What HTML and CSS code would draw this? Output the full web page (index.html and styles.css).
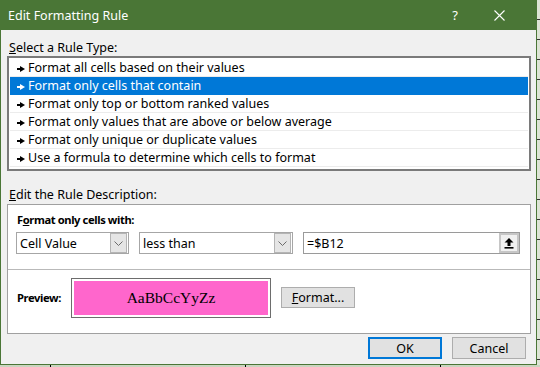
FILE: index.html
```html
<!DOCTYPE html>
<html lang="en">
<head>
  <meta charset="UTF-8" />
  <title>Edit Formatting Rule</title>
  <link rel="stylesheet" href="styles.css">
</head>
<body>

  <div class="screen">
    <div class="dialog">
      <div class="titlebar">
        <span class="title">Edit Formatting Rule</span>
        <span class="help">?</span>
        <span class="close">
          <svg width="11" height="11" viewBox="0 0 11 11"><path d="M0.5 0.5 L10.5 10.5 M10.5 0.5 L0.5 10.5" stroke="#fff" stroke-width="1.1" fill="none"/></svg>
        </span>
      </div>

      <div class="content">
        <div class="label"><u>S</u>elect a Rule Type:</div>
        <ul class="rules">
          <li><span class="pointer"></span>Format all cells based on their values</li>
          <li class="selected"><span class="pointer"></span>Format only cells that contain</li>
          <li><span class="pointer"></span>Format only top or bottom ranked values</li>
          <li><span class="pointer"></span>Format only values that are above or below average</li>
          <li><span class="pointer"></span>Format only unique or duplicate values</li>
          <li><span class="pointer"></span>Use a formula to determine which cells to format</li>
        </ul>

        <div class="label desc-label"><u>E</u>dit the Rule Description:</div>
        <div class="desc">
          <div class="desc-top">
            <div class="bold-label">F<u>o</u>rmat only cells with:</div>
            <div class="fields">
              <div class="combo combo-small">
                <span class="combo-text">Cell Value</span>
                <span class="drop">
                  <svg width="9" height="5" viewBox="0 0 9 5"><path d="M0.5 0.5 L4.5 4.5 L8.5 0.5" stroke="#6b6b6b" fill="none"/></svg>
                </span>
              </div>
              <div class="combo combo-mid">
                <span class="combo-text">less than</span>
                <span class="drop">
                  <svg width="9" height="5" viewBox="0 0 9 5"><path d="M0.5 0.5 L4.5 4.5 L8.5 0.5" stroke="#6b6b6b" fill="none"/></svg>
                </span>
              </div>
              <div class="combo ref-input">
                <span class="combo-text">=$B12</span>
                <span class="collapse">
                  <svg width="10" height="11" viewBox="0 0 10 11"><path d="M5 0 L9.5 4.5 L6.5 4.5 L6.5 8 L3.5 8 L3.5 4.5 L0.5 4.5 Z" fill="#000"/><rect x="0.5" y="9" width="9" height="1.6" fill="#000"/></svg>
                </span>
              </div>
            </div>
          </div>

          <div class="desc-bottom">
            <div class="bold-label preview-label">Preview:</div>
            <div class="preview"><div class="swatch">AaBbCcYyZz</div></div>
            <button class="btn btn-format"><u>F</u>ormat...</button>
          </div>
        </div>

        <div class="actions">
          <button class="btn btn-ok">OK</button>
          <button class="btn">Cancel</button>
        </div>
      </div>
    </div>
    <div class="sheet-edge"></div>
  </div>
  <div class="sheet-bottom">
    <span></span><span></span><span></span>
  </div>

</body>
</html>
```

FILE: styles.css
```css
body {
  margin: 0;
  width: 540px;
  height: 367px;
  overflow: hidden;
  font-family: 'Noto Sans', 'Open Sans', sans-serif;
  font-size: 12.5px;
  color: #000;
  background: #d3dccb;
}

.screen {
  display: flex;
  height: 365px;
}

/* dialog window */
.dialog {
  width: 535px;
  border: 1px solid #4a7636;
  border-top: 0;
  background: #f0f0f0;
  display: flex;
  flex-direction: column;
}

.titlebar {
  height: 30px;
  background: #4a7636;
  color: #fff;
  display: flex;
  align-items: center;
  padding: 0 15px 0 8px;
  margin: 0 -1px;
}

.title {
  flex: 1;
  font-size: 12.5px;
}

.help {
  width: 30px;
  text-align: center;
  font-size: 13px;
}

.close {
  width: 46px;
  margin-left: 6px;
  display: flex;
  justify-content: center;
}

.content {
  flex: 1;
  padding: 9px 5px 0 6px;
  display: flex;
  flex-direction: column;
}

.label {
  height: 17px;
  line-height: 17px;
  padding-left: 2px;
}

.desc-label {
  height: 16px;
  line-height: 16px;
  margin-top: 16px;
  margin-bottom: 1px;
}

/* rule type list */
.rules {
  list-style: none;
  margin: 0;
  padding: 1px;
  height: 109px;
  border: 2px solid #7a7a7a;
  background: #fff;
}

.rules li {
  height: 16px;
  padding-top: 1px;
  line-height: 16px;
  border-bottom: 1px solid #ececec;
  display: flex;
  align-items: center;
  padding-left: 7px;
}

.rules li.selected {
  background: #0078d7;
  color: #fff;
  border-bottom-color: #0078d7;
}

.pointer {
  position: relative;
  width: 8px;
  height: 5px;
  margin-right: 3px;
}

.pointer::before {
  content: "";
  position: absolute;
  left: 0;
  top: 2px;
  width: 4px;
  height: 2px;
  background: currentColor;
}

.pointer::after {
  content: "";
  position: absolute;
  left: 3px;
  top: 0;
  border-left: 5px solid currentColor;
  border-top: 3px solid transparent;
  border-bottom: 3px solid transparent;
}

/* rule description group */
.desc {
  border: 1px solid #a0a0a0;
  background: #fff;
  height: 128px;
  display: flex;
  flex-direction: column;
}

.desc-top {
  padding: 7px 10px 15px 8px;
  border-bottom: 1px solid #b9b9b9;
}

.bold-label {
  font-weight: bold;
  font-size: 11.2px;
  letter-spacing: -0.4px;
  height: 16px;
  line-height: 16px;
  padding-left: 1px;
}

.fields {
  display: flex;
  gap: 10px;
  margin-top: 4px;
}

.combo {
  height: 20px;
  border: 1px solid #a6a6a6;
  display: flex;
  align-items: center;
  background: #fff;
}

.combo-small {
  width: 111px;
}

.combo-mid {
  width: 152px;
}

.ref-input {
  width: 215px;
  border-color: #9a9a9a;
}

.combo-text {
  flex: 1;
  padding-left: 3px;
}

.drop {
  width: 15px;
  height: 18px;
  margin-right: 1px;
  border: 1px solid #b4b4b4;
  background: #e5e5e5;
  display: flex;
  align-items: center;
  justify-content: center;
}

.collapse {
  width: 16px;
  height: 16px;
  border: 2px solid #c6c6c6;
  background: #f0f0f0;
  display: flex;
  align-items: center;
  justify-content: center;
}

.desc-bottom {
  flex: 1;
  display: flex;
  align-items: center;
  padding: 0 0 7px 8px;
}

.preview-label {
  width: 54px;
  padding-left: 1px;
}

.preview {
  width: 194px;
  height: 34px;
  padding: 2px;
  border: 1px solid #6d6d6d;
  background: #fff;
}

.swatch {
  height: 34px;
  line-height: 34px;
  background: #ff66cc;
  text-align: center;
  font-family: 'Liberation Serif', serif;
  font-size: 15.5px;
}

/* buttons */
.btn {
  width: 74px;
  height: 22px;
  padding: 0;
  border: 1px solid #adadad;
  background: #e1e1e1;
  font-family: inherit;
  font-size: 12.5px;
  color: #000;
}

.btn-format {
  height: 21px;
  margin-left: 10px;
  margin-bottom: 1px;
}

.btn-ok {
  border: 2px solid #0078d7;
}

.actions {
  display: flex;
  justify-content: flex-end;
  gap: 10px;
  margin-top: 3px;
  padding-right: 5px;
}

/* worksheet showing behind the dialog */
.sheet-edge {
  flex: 1;
  background: repeating-linear-gradient(#dde4d5 0 19px, #333 19px 20px);
}

.sheet-bottom {
  height: 2px;
  background: #cbd4c0;
  position: relative;
}

.sheet-bottom span {
  position: absolute;
  top: 0;
  width: 1px;
  height: 2px;
  background: #000;
}

.sheet-bottom span:nth-child(1) { left: 50px; }
.sheet-bottom span:nth-child(2) { left: 245px; }
.sheet-bottom span:nth-child(3) { left: 440px; }
```
